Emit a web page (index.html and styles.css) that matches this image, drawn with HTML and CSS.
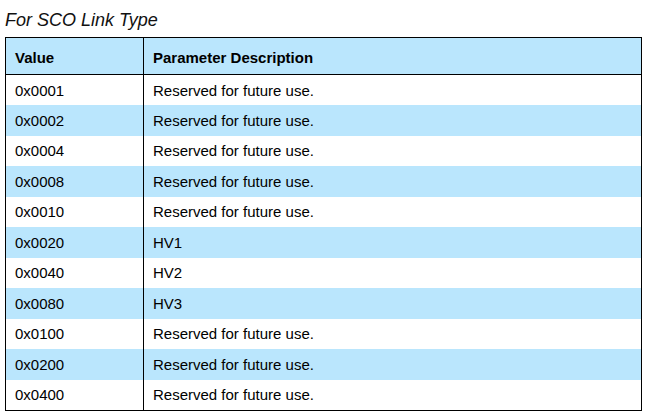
FILE: index.html
```html
<!DOCTYPE html>
<html>
<head>
<meta charset="utf-8">
<link rel="stylesheet" href="styles.css">
</head>
<body>
<div class="page">
  <div class="caption">For SCO Link Type</div>
  <table class="params">
    <thead>
      <tr><th class="col-value">Value</th><th class="col-desc">Parameter Description</th></tr>
    </thead>
    <tbody>
      <tr><td>0x0001</td><td>Reserved for future use.</td></tr>
      <tr><td>0x0002</td><td>Reserved for future use.</td></tr>
      <tr><td>0x0004</td><td>Reserved for future use.</td></tr>
      <tr><td>0x0008</td><td>Reserved for future use.</td></tr>
      <tr><td>0x0010</td><td>Reserved for future use.</td></tr>
      <tr><td>0x0020</td><td>HV1</td></tr>
      <tr><td>0x0040</td><td>HV2</td></tr>
      <tr><td>0x0080</td><td>HV3</td></tr>
      <tr><td>0x0100</td><td>Reserved for future use.</td></tr>
      <tr><td>0x0200</td><td>Reserved for future use.</td></tr>
      <tr><td>0x0400</td><td>Reserved for future use.</td></tr>
    </tbody>
  </table>
</div>
</body>
</html>
```

FILE: styles.css
```css
html, body {
  margin: 0;
  padding: 0;
  background: #ffffff;
}

.page {
  padding: 9px 0 0 5px;
  font-family: "Liberation Sans", Arial, sans-serif;
  color: #000;
}

.caption {
  font-style: italic;
  font-size: 18px;
  line-height: 22px;
  color: #111;
  margin-bottom: 6px;
}

.params {
  border-collapse: collapse;
  width: 637px;
  font-size: 15px;
  table-layout: fixed;
}

.params th,
.params td {
  text-align: left;
  padding: 0 0 0 9px;
  vertical-align: middle;
}

.params th {
  height: 34px;
  font-weight: bold;
  background: #bae6fd;
  border: 1px solid #000;
  padding-top: 2px;
}

.col-value {
  width: 128px;
}

.params tbody tr {
  height: 30.5px;
}

.params tbody tr:nth-child(even) td {
  background: #bae6fd;
}

.params td {
  border-left: 1px solid #000;
  border-right: 1px solid #000;
}

.params tbody tr:last-child td {
  border-bottom: 1px solid #000;
}
```
